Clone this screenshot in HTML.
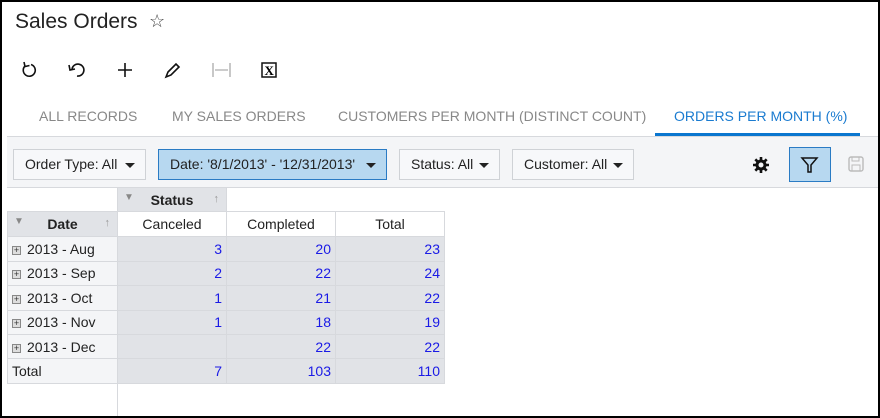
<!DOCTYPE html>
<html><head><style>
*{box-sizing:border-box;margin:0;padding:0}
body{width:880px;height:418px;overflow:hidden;font-family:"Liberation Sans",Arial,sans-serif;background:#fff;position:relative}
.frame{position:absolute;left:0;top:0;width:880px;height:418px;border:2px solid #000}
.abs{position:absolute}
.title{left:15px;top:10px;font-size:21px;color:#222}
.star{left:149px;top:11px;font-size:18px;color:#444}
.tab{top:108px;font-size:14px;color:#888}
.bar{left:7px;top:136px;width:871px;height:52px;background:#f4f5f7;border-top:1px solid #d7d9dd;border-bottom:1px solid #d7d9dd}
.dd{top:149px;height:31px;border:1px solid #cfd2d6;background:#f7f8fa;font-size:14px;color:#222;line-height:29px;padding-left:11px}
.dd:after{content:"";position:absolute;right:10px;top:13px;border-left:5px solid transparent;border-right:5px solid transparent;border-top:5px solid #222}
table{position:absolute;left:7px;top:187px;border-collapse:collapse;font-size:14px;color:#222;line-height:16px}
td{border:1px solid #d7d9dd;height:24.4px;padding:0 4px;white-space:nowrap}
.g{background:#e1e3e7}
.num{text-align:right;color:#1a1ae6;background:#e1e3e7}
.lab{background:#f4f5f7}
.plus{display:inline-block;width:9px;height:9px;border:1px solid #888;background:#ddd;font-size:9px;line-height:7px;text-align:center;margin-right:6px;vertical-align:1px;color:#333}
.hd{position:relative;text-align:center;font-weight:bold}
.hd i{position:absolute;left:6px;top:2px;color:#888;font-size:10px;font-style:normal;font-weight:normal}
.hd b{position:absolute;right:7px;top:3px;color:#999;font-weight:normal;font-size:11px}
</style></head><body>
<div class="abs title">Sales Orders</div>
<div class="abs star">☆</div>
<svg class="abs" style="left:20px;top:60px" width="260" height="22" viewBox="0 0 260 22">
<g fill="none" stroke="#111" stroke-width="1.6">
<path d="M5 6 A6 6 0 1 0 11 4.5"/><path d="M4 2 L5 6.5 L9.5 5.5"/>
<path d="M52 9 A6 6 0 1 1 57 16" /><path d="M49 5 L50 10 L55 9"/>
<path d="M105 3 V17 M98 10 H112"/>
<path d="M146 17 L148 12 L156 4 L159 7 L151 15 Z"/>
<path stroke="#bbb" d="M193 3 V17 M210 3 V17 M195 10 H208"/>
</g>
<rect x="242" y="3" width="14" height="14" fill="#fff" stroke="#111" stroke-width="1.5"/>
<text x="244.5" y="15" font-family="Liberation Serif" font-weight="bold" font-size="13">X</text>
</svg>
<div class="abs tab" style="left:39px">ALL RECORDS</div>
<div class="abs tab" style="left:172px">MY SALES ORDERS</div>
<div class="abs tab" style="left:338px">CUSTOMERS PER MONTH (DISTINCT COUNT)</div>
<div class="abs tab" style="left:674px;color:#1a7bd0">ORDERS PER MONTH (%)</div>
<div class="abs bar"></div>
<div class="abs" style="left:655px;top:133px;width:205px;height:3px;background:#0a76cf"></div>
<div class="abs dd" style="left:13px;width:133px">Order Type: All</div>
<div class="abs dd" style="left:158px;width:229px;background:#b7d8f0;border-color:#2a7bc4">Date: '8/1/2013' - '12/31/2013'</div>
<div class="abs dd" style="left:399px;width:101px">Status: All</div>
<div class="abs dd" style="left:512px;width:122px">Customer: All</div>
<svg class="abs" style="left:752px;top:156px" width="18" height="18" viewBox="0 0 18 18"><g stroke="#111" stroke-width="2.6"><path d="M9 1V17M1 9H17M3.3 3.3L14.7 14.7M14.7 3.3L3.3 14.7"/></g><circle cx="9" cy="9" r="5.5" fill="#111"/><circle cx="9" cy="9" r="2.5" fill="#f4f5f7"/></svg>
<div class="abs" style="left:789px;top:147px;width:42px;height:35px;background:#b7d8f0;border:1px solid #2a7bc4"></div>
<svg class="abs" style="left:800px;top:155px" width="20" height="20"><path d="M2 3 H17 L11 10 V17 L8 17 V10 Z" fill="none" stroke="#111" stroke-width="1.5"/></svg>
<svg class="abs" style="left:848px;top:156px" width="16" height="16"><rect x="1" y="1" width="14" height="14" rx="2" fill="none" stroke="#bbb" stroke-width="1.4"/><rect x="4" y="1" width="7" height="4" fill="none" stroke="#bbb"/><rect x="4" y="9" width="8" height="6" fill="none" stroke="#bbb"/></svg>
<div class="abs" style="left:117px;top:188px;width:1px;height:230px;background:#d7d9dd"></div>
<table>
<colgroup><col style="width:110px"><col style="width:109px"><col style="width:109px"><col style="width:109px"></colgroup>
<tr><td style="border:none;border-right:1px solid #d7d9dd;height:22px"></td><td class="g hd" style="height:22px"><i>▼</i>Status<b>↑</b></td><td style="border:none;border-left:1px solid #d7d9dd"></td><td style="border:none"></td></tr>
<tr><td class="g hd" style="height:25px"><i>▼</i>Date<b>↑</b></td><td style="text-align:center">Canceled</td><td style="text-align:center">Completed</td><td style="text-align:center">Total</td></tr>
<tr><td class="lab"><span class="plus">+</span>2013 - Aug</td><td class="num">3</td><td class="num">20</td><td class="num">23</td></tr>
<tr><td class="lab"><span class="plus">+</span>2013 - Sep</td><td class="num">2</td><td class="num">22</td><td class="num">24</td></tr>
<tr><td class="lab"><span class="plus">+</span>2013 - Oct</td><td class="num">1</td><td class="num">21</td><td class="num">22</td></tr>
<tr><td class="lab"><span class="plus">+</span>2013 - Nov</td><td class="num">1</td><td class="num">18</td><td class="num">19</td></tr>
<tr><td class="lab"><span class="plus">+</span>2013 - Dec</td><td class="num"></td><td class="num">22</td><td class="num">22</td></tr>
<tr><td class="lab">Total</td><td class="num">7</td><td class="num">103</td><td class="num">110</td></tr>
</table>
<div class="frame"></div>
</body></html>
